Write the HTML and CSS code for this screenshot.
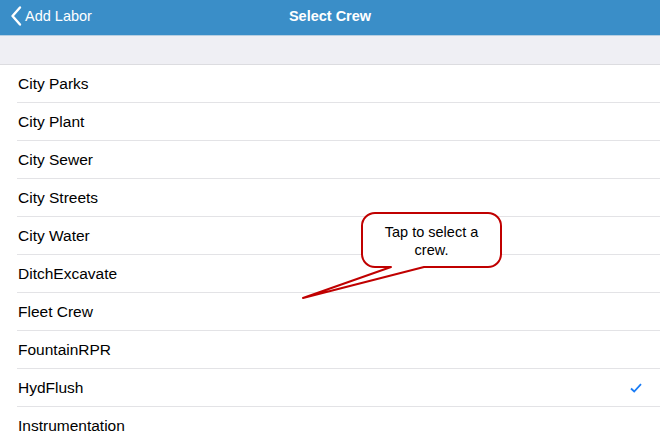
FILE: index.html
```html
<!DOCTYPE html>
<html>
<head>
<meta charset="utf-8">
<link rel="stylesheet" href="styles.css">
</head>
<body>
<div class="page">
  <header class="nav">
    <div class="back">
      <svg class="chev" width="12" height="22" viewBox="0 0 12 22"><path d="M10 2.5 L2.5 11 L10 19.5" fill="none" stroke="#fff" stroke-width="2.4" stroke-linecap="round" stroke-linejoin="round"/></svg>
      <span>Add Labor</span>
    </div>
    <div class="title">Select Crew</div>
  </header>
  <div class="band"></div>
  <ul class="list">
    <li class="row"><span>City Parks</span></li>
    <li class="row"><span>City Plant</span></li>
    <li class="row"><span>City Sewer</span></li>
    <li class="row"><span>City Streets</span></li>
    <li class="row"><span>City Water</span></li>
    <li class="row"><span>DitchExcavate</span></li>
    <li class="row"><span>Fleet Crew</span></li>
    <li class="row"><span>FountainRPR</span></li>
    <li class="row"><span>HydFlush</span><svg class="check" width="12" height="10" viewBox="0 0 12 10"><path d="M1 5.5 L4.2 8.5 L11 1.2" fill="none" stroke="#1a7cf5" stroke-width="1.8"/></svg></li>
    <li class="row"><span>Instrumentation</span></li>
  </ul>
  <div class="callout">
    <svg class="bubble" width="210" height="100" viewBox="0 0 210 100">
      <path d="M73 2 H186 A13 13 0 0 1 199 15 V43 A13 13 0 0 1 186 56 H122 L1 87 L89 56 H73 A13 13 0 0 1 60 43 V15 A13 13 0 0 1 73 2 Z" fill="#fff" stroke="#c00000" stroke-width="2" stroke-linejoin="round"/>
    </svg>
    <div class="ctext">Tap to select a<br>crew.</div>
  </div>
</div>
</body>
</html>
```
FILE: styles.css
```css
* { box-sizing: border-box; margin: 0; padding: 0; }
html, body { width: 660px; height: 441px; overflow: hidden; background: #fff; }
body { font-family: "Liberation Sans", Arial, sans-serif; }
.page { position: relative; width: 660px; height: 441px; }
.nav {
  height: 36px;
  background: #3a8ec8;
  border-bottom: 1px solid #b7cfe2;
  position: relative;
  display: flex;
  align-items: center;
  color: #fff;
}
.back { display: flex; align-items: center; gap: 3px; padding-left: 10px; font-size: 14.5px; padding-bottom: 3px; }
.chev { display: block; }
.title { position: absolute; left: 0; right: 0; text-align: center; font-weight: bold; font-size: 14.5px; top: 8px; pointer-events: none; }
.band { height: 29px; background: #efeff4; border-bottom: 1px solid #dcdce0; }
.list { list-style: none; }
.row {
  height: 38px;
  margin-left: 17px;
  border-bottom: 1px solid #e3e3e6;
  display: flex;
  align-items: center;
  justify-content: space-between;
  padding-left: 1px;
  padding-right: 18px;
  font-size: 15.5px;
  color: #000;
  padding-top: 1px;
}
.check { display: block; }
.callout { position: absolute; left: 302px; top: 211px; width: 210px; height: 100px; }
.bubble { position: absolute; left: 0; top: 0; }
.ctext {
  position: absolute;
  left: 60px; top: 12px; width: 139px;
  text-align: center;
  font-size: 14.5px;
  line-height: 18px;
  color: #000;
}
```
